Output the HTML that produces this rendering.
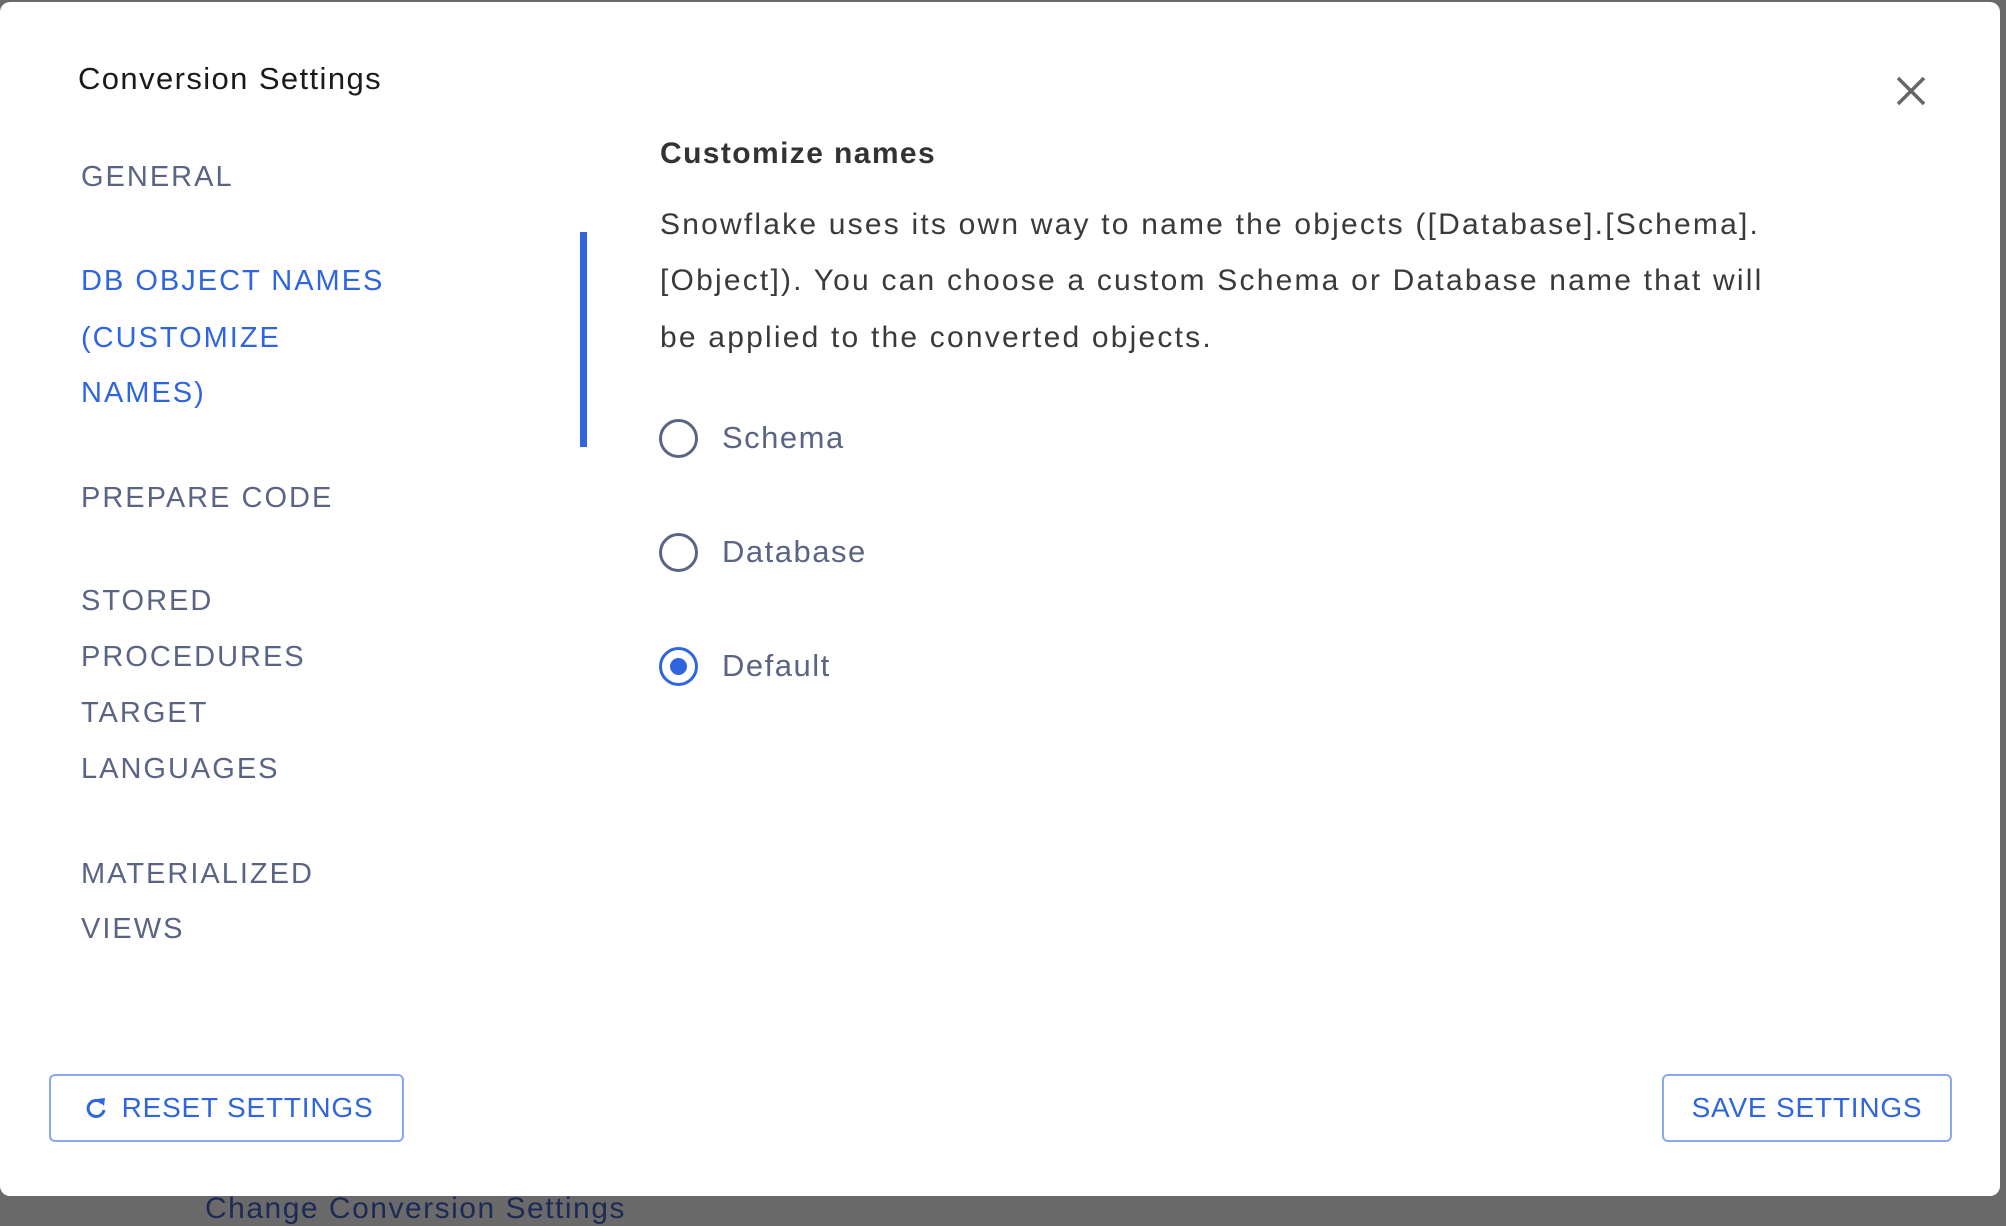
<!DOCTYPE html>
<html><head><meta charset="utf-8"><style>
html,body{margin:0;padding:0;width:2006px;height:1204px;overflow:hidden;background:#6a6a6a;font-family:"Liberation Sans",sans-serif;}
.bgtext{position:absolute;left:205px;top:1192px;font-size:30px;color:#1d2a55;letter-spacing:1.5px;}
.modal{position:absolute;left:0;top:2px;width:2000px;height:1194px;background:#fff;border-radius:10px;}
.t{position:absolute;white-space:nowrap;line-height:1;}
.title{left:78px;top:61px;font-size:31px;color:#1a1a1a;letter-spacing:1.4px;}
.nav{left:81px;font-size:29px;color:#5a6583;letter-spacing:2px;}
.act{color:#2f66e0;}
.bar{position:absolute;left:580px;top:230px;width:7px;height:215px;background:#2f66e0;}
.h{left:660px;top:137px;font-size:30px;font-weight:bold;color:#333;letter-spacing:1.4px;}
.p{left:660px;font-size:30px;color:#3a3a3a;letter-spacing:2.2px;}
.radio{position:absolute;left:659px;width:33px;height:33px;border:3.5px solid #5a6583;border-radius:50%;}
.radio.on{border-color:#2f66e0;}
.radio.on::after{content:"";position:absolute;left:8px;top:8px;width:17px;height:17px;border-radius:50%;background:#2f66e0;}
.lbl{left:722px;font-size:31px;color:#5a6583;letter-spacing:1.5px;}
.btn{position:absolute;top:1072px;height:68px;border:2px solid #8aa8ef;border-radius:6px;color:#2f66e0;font-size:28px;letter-spacing:0.8px;display:flex;align-items:center;justify-content:center;box-sizing:border-box;}
</style></head><body>
<div class="bgtext">Change Conversion Settings</div>
<div class="modal">
<div class="t title">Conversion Settings</div>
<svg style="position:absolute;left:1895px;top:73px" width="32" height="32" viewBox="0 0 32 32"><path d="M3 3L29 29M29 3L3 29" stroke="#666" stroke-width="3.5"/></svg>
<div class="t nav" style="top:161px">GENERAL</div>
<div class="t nav act" style="top:265px">DB OBJECT NAMES</div>
<div class="t nav act" style="top:322px">(CUSTOMIZE</div>
<div class="t nav act" style="top:377px">NAMES)</div>
<div class="t nav" style="top:482px">PREPARE CODE</div>
<div class="t nav" style="top:585px">STORED</div>
<div class="t nav" style="top:641px">PROCEDURES</div>
<div class="t nav" style="top:697px">TARGET</div>
<div class="t nav" style="top:753px">LANGUAGES</div>
<div class="t nav" style="top:858px">MATERIALIZED</div>
<div class="t nav" style="top:913px">VIEWS</div>
<div class="bar"></div>
<div class="t h">Customize names</div>
<div class="t p" style="top:208px">Snowflake uses its own way to name the objects ([Database].[Schema].</div>
<div class="t p" style="top:264px">[Object]). You can choose a custom Schema or Database name that will</div>
<div class="t p" style="top:321px">be applied to the converted objects.</div>
<div class="radio" style="top:417px"></div><div class="t lbl" style="top:420px">Schema</div>
<div class="radio" style="top:531px"></div><div class="t lbl" style="top:534px">Database</div>
<div class="radio on" style="top:645px"></div><div class="t lbl" style="top:648px">Default</div>
<div class="btn" style="left:49px;width:355px;"><svg width="24" height="26" viewBox="0 0 24 26" style="margin-right:14px;margin-left:4px"><path d="M18 8A8 8 0 1 0 20 15" fill="none" stroke="#2f66e0" stroke-width="3"/><path d="M13 4L21 3L20 11Z" fill="#2f66e0"/></svg>RESET SETTINGS</div>
<div class="btn" style="left:1662px;width:290px;">SAVE SETTINGS</div>
</div>
</body></html>
